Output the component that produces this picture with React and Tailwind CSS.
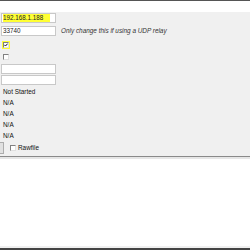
import React from 'react';

const Field = ({ children }) => (
  <div className="w-[55px] h-[10px] border border-[#c8c8c8] bg-white flex items-center pl-[1px] text-[6.3px] leading-none text-[#222]">
    {children}
  </div>
);

const Box = ({ checked }) => (
  <div className="w-[6px] h-[6px] border-t border-l border-[#808080] border-r border-b border-r-[#e0e0e0] border-b-[#e0e0e0] bg-white flex items-center justify-center">
    {checked && (
      <svg width="4" height="4" viewBox="0 0 4 4">
        <path d="M0.3 1.8 L1.5 3 L3.7 0.6" stroke="#111" strokeWidth="1" fill="none" />
      </svg>
    )}
  </div>
);

const App = () => {
  return (
    <div className="w-[250px] h-[250px] flex flex-col bg-white overflow-hidden" style={{ fontFamily: '"Liberation Sans", Arial, sans-serif' }}>
      <div className="h-[1px] bg-[#555]" />
      <div className="h-[11px] bg-white" />
      <div className="h-[145px] bg-[#f0f0f0] border-b border-[#8a8a8a] pl-[1px] pt-[1px] flex flex-col text-[6.4px] text-[#111]">
        <Field>
          <span className="bg-[#ffff33] pr-[7px] py-[1px]">192.168.1.188</span>
        </Field>
        <div className="flex items-center mt-[3px]">
          <Field>33740</Field>
          <span className="ml-[5px] italic text-[#333]">Only change this if using a UDP relay</span>
        </div>
        <div className="mt-[5px] ml-[1px] w-[8px] h-[8px] bg-[#ffff33] flex items-center justify-center">
          <Box checked />
        </div>
        <div className="mt-[5px] ml-[2px]">
          <Box />
        </div>
        <div className="mt-[4px]"><Field /></div>
        <div className="mt-[1px]"><Field /></div>
        <div className="mt-[1px] ml-[2px] flex flex-col leading-[11px]">
          <span>Not Started</span>
          <span>N/A</span>
          <span>N/A</span>
          <span>N/A</span>
          <span>N/A</span>
        </div>
        <div className="flex items-center mt-[1px]">
          <div className="ml-[-5px] w-[8px] h-[12px] border border-[#adadad] bg-[#e1e1e1]" />
          <div className="ml-[6px]"><Box /></div>
          <span className="ml-[2px]">Rawfile</span>
        </div>
      </div>
      <div className="h-[2px] bg-[#e6e6e6]" />
      <div className="flex-1 bg-white" />
      <div className="h-[2px] bg-[#f0f0f0]" />
      <div className="h-[2px] bg-[#444]" />
    </div>
  );
};

export default App;
